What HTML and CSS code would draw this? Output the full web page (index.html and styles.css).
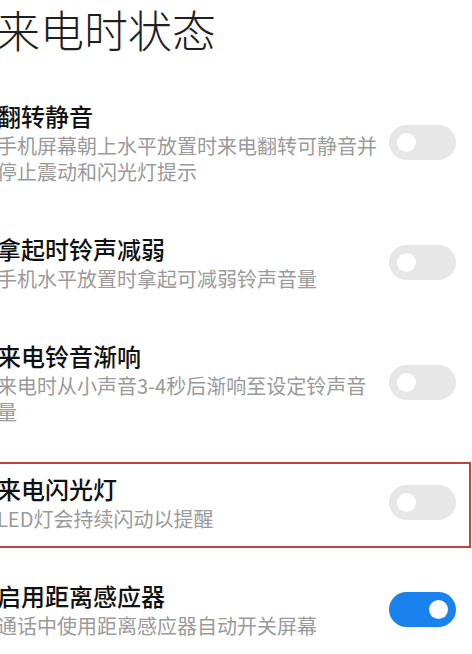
FILE: index.html
```html
<!DOCTYPE html>
<html lang="zh-CN">
<head>
<meta charset="utf-8">
<title>来电时状态</title>
<link rel="stylesheet" href="styles.css">
</head>
<body>
<div class="page">
  <h1 class="header">来电时状态</h1>
  <div class="list">
    <div class="item">
      <div class="text">
        <div class="title">翻转静音</div>
        <div class="sub">手机屏幕朝上水平放置时来电翻转可静音并停止震动和闪光灯提示</div>
      </div>
      <div class="toggle"><span class="knob"></span></div>
    </div>
    <div class="item">
      <div class="text">
        <div class="title">拿起时铃声减弱</div>
        <div class="sub">手机水平放置时拿起可减弱铃声音量</div>
      </div>
      <div class="toggle"><span class="knob"></span></div>
    </div>
    <div class="item">
      <div class="text">
        <div class="title">来电铃音渐响</div>
        <div class="sub">来电时从小声音3-4秒后渐响至设定铃声音量</div>
      </div>
      <div class="toggle"><span class="knob"></span></div>
    </div>
    <div class="item highlighted">
      <div class="text">
        <div class="title">来电闪光灯</div>
        <div class="sub">LED灯会持续闪动以提醒</div>
      </div>
      <div class="toggle"><span class="knob"></span></div>
      <div class="mark"></div>
    </div>
    <div class="item">
      <div class="text">
        <div class="title">启用距离感应器</div>
        <div class="sub">通话中使用距离感应器自动开关屏幕</div>
      </div>
      <div class="toggle on"><span class="knob"></span></div>
    </div>
  </div>
</div>
</body>
</html>
```

FILE: styles.css
```css
html, body {
  margin: 0;
  padding: 0;
  background: #ffffff;
}
body {
  font-family: "Noto Sans CJK SC", "Noto Sans", sans-serif;
  overflow: hidden;
}
.page {
  width: 472px;
  height: 654px;
  overflow: hidden;
}
.header {
  margin: 0 0 18px -4px;
  font-size: 44px;
  line-height: 58px;
  font-weight: 300;
  color: #1f1f1f;
}
.list {
  margin-left: -3px;
  display: flex;
  flex-direction: column;
}
.item {
  position: relative;
  display: flex;
  align-items: center;
  gap: 10px;
  padding: 23px 16px 24px 0;
}
.text {
  flex: 1;
  min-width: 0;
}
.title {
  font-size: 24px;
  line-height: 34px;
  font-weight: 500;
  color: #111111;
}
.sub {
  font-size: 20px;
  line-height: 26px;
  color: #9a9a9a;
}
.toggle {
  flex: none;
  width: 67px;
  height: 35px;
  border-radius: 18px;
  background: #e7e7e7;
  display: flex;
  align-items: center;
  padding: 0 8px;
  box-sizing: border-box;
}
.knob {
  width: 19px;
  height: 19px;
  border-radius: 50%;
  background: #ffffff;
}
.toggle.on {
  background: #1a82ef;
  justify-content: flex-end;
}
.mark {
  position: absolute;
  top: 13px;
  bottom: 8px;
  left: 0;
  right: 1px;
  border: 2px solid #b9473f;
  pointer-events: none;
}
```
